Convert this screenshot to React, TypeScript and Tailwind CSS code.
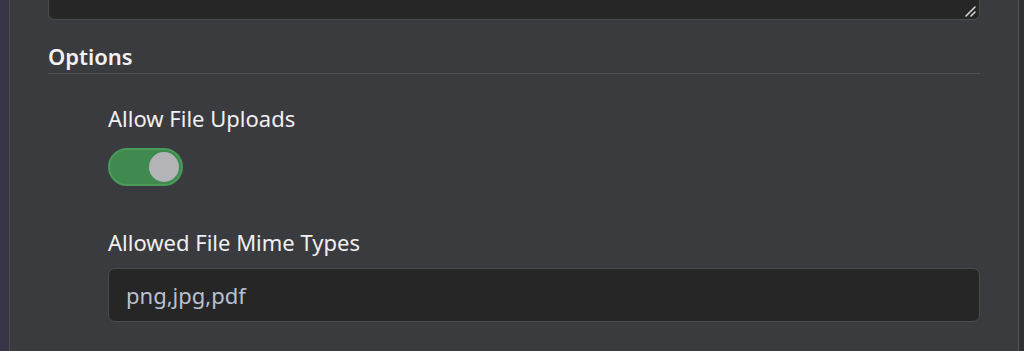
export default function App() {
  return (
    <div
      className="flex h-[351px] w-[1024px] overflow-hidden bg-[#3a3b3e]"
      style={{ fontFamily: '"Noto Sans", "Open Sans", sans-serif' }}
    >
      {/* left rail */}
      <div className="w-[9px] shrink-0 bg-[#383646]" />
      <div className="w-px shrink-0 bg-[#4c4c52]" />

      <main className="flex-1 px-[38px]">
        {/* bottom of textarea scrolled above */}
        <div className="relative h-[20px] rounded-b-[6px] border-x border-b border-[#4b4c4f] bg-[#262626]">
          <svg
            className="absolute bottom-[2px] right-[3px]"
            width="12"
            height="12"
            viewBox="0 0 12 12"
          >
            <path d="M11 2 L2 11 M11 7 L7 11" stroke="#d4d4d4" strokeWidth="1.6" strokeLinecap="round" />
          </svg>
        </div>

        <h3 className="mt-[20px] border-b border-[#515255] text-[22px] font-semibold leading-[33px] text-[#f2f2f2]">
          Options
        </h3>

        <div className="pl-[60px]">
          <div className="mt-[28px] text-[22px] leading-[33px] text-[#f0f0f0]">Allow File Uploads</div>
          <button
            type="button"
            className="mt-[13px] flex h-[38px] w-[75px] items-center justify-end rounded-full border-2 border-[#4a9a59] bg-[#40894f] pr-[2px]"
          >
            <span className="h-[30px] w-[30px] rounded-full bg-[#b3b3b8]" />
          </button>

          <div className="mt-[40px] text-[22px] leading-[33px] text-[#f0f0f0]">Allowed File Mime Types</div>
          <div className="mt-[9px] flex h-[54px] items-center rounded-[7px] border border-[#4b4c4f] bg-[#262626] pl-[17px] text-[22px] leading-[33px] text-[#b9c1d3]">
            png,jpg,pdf
          </div>
        </div>
      </main>

      {/* right rail */}
      <div className="w-px shrink-0 bg-[#525356]" />
      <div className="w-[5px] shrink-0 bg-[#2f3033]" />
    </div>
  );
}
